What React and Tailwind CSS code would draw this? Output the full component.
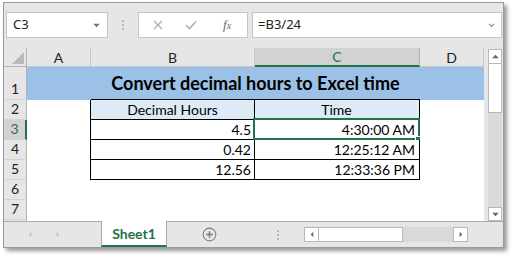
import React from 'react';

const cols = [
  { key: 'A', w: 'w-[64px]' },
  { key: 'B', w: 'w-[164px]' },
  { key: 'C', w: 'w-[165px]' },
  { key: 'D', w: 'w-[64px]' },
];

const data = [
  ['4.5', '4:30:00 AM'],
  ['0.42', '12:25:12 AM'],
  ['12.56', '12:33:36 PM'],
];

const cellFont = { fontFamily: "Lato, 'Open Sans', sans-serif" };

function RowHeader({ n, h, active }) {
  return (
    <div
      className={`w-[23px] shrink-0 ${h} flex items-end justify-center pb-[1px] border-b border-[#d4d4d4] text-[14px] leading-none ${
        active
          ? 'bg-[#d2d2d2] border-r-2 border-r-[#217346] text-[#217346]'
          : 'bg-[#e6e6e6] border-r border-r-[#b4b4b4] text-[#222]'
      }`}
      style={cellFont}
    >
      <span className="pb-[2px]">{n}</span>
    </div>
  );
}

function TitleRow() {
  return (
    <div className="flex h-[33px]">
      <RowHeader n={1} h="h-[33px]" />
      <div className="flex flex-1 bg-[#9bc2e6] relative">
        <div className="w-[64px] h-full" />
        <div className="w-[164px] h-full border-b border-black" />
        <div className="w-[165px] h-full border-b border-black" />
        <div className="w-[64px] h-full" />
        <div className="absolute inset-0 flex items-center justify-center pb-[1px] text-[18px] font-bold text-black" style={cellFont}>
          Convert decimal hours to Excel time
        </div>
      </div>
    </div>
  );
}

function TableRow({ n, b, c, header, active }) {
  return (
    <div className="flex h-[20px]">
      <RowHeader n={n} h="h-[20px]" active={active} />
      <div className="w-[64px] h-full border-r border-black bg-white" />
      <div
        className={`w-[164px] h-full border-r border-b border-black flex items-center px-[3px] text-[14px] text-black ${
          header ? 'bg-[#ddebf7] justify-center' : 'bg-white justify-end'
        }`}
        style={cellFont}
      >
        {b}
      </div>
      <div
        className={`relative w-[165px] h-full border-r border-b border-black flex items-center pl-[3px] pr-[4px] text-[14px] text-black ${
          header ? 'bg-[#ddebf7] justify-center' : 'bg-white justify-end'
        }`}
        style={cellFont}
      >
        {c}
        {active && (
          <>
            <div className="absolute -left-[2px] -top-[2px] w-[167px] h-[22px] border-2 border-[#217346]" />
            <div className="absolute left-[160px] top-[16px] w-[6px] h-[6px] bg-[#217346] border border-white" />
          </>
        )}
      </div>
      <div className="w-[64px] h-full bg-white" />
    </div>
  );
}

function EmptyRow({ n }) {
  return (
    <div className="flex h-[20px]">
      <RowHeader n={n} h="h-[20px]" />
      <div className="flex-1 bg-white" />
    </div>
  );
}

function Tri({ dir, cls }) {
  const pts = {
    up: '0,5 4,1 8,5',
    down: '0,1 4,5 8,1',
    left: '5,0 1,4 5,8',
    right: '1,0 5,4 1,8',
  }[dir];
  const vb = dir === 'up' || dir === 'down' ? '0 0 8 6' : '0 0 6 8';
  return (
    <svg viewBox={vb} className={cls}>
      <polygon points={pts} fill="currentColor" />
    </svg>
  );
}

function Dots() {
  return (
    <div className="flex flex-col gap-[2px]">
      <div className="w-[2px] h-[2px] bg-[#b5b5b5]" />
      <div className="w-[2px] h-[2px] bg-[#b5b5b5]" />
      <div className="w-[2px] h-[2px] bg-[#b5b5b5]" />
    </div>
  );
}

export default function App() {
  return (
    <div className="w-[512px] h-[258px] bg-white overflow-hidden">
      <div className="ml-[3px] mt-[2px] w-[501px] h-[246px] border border-[#9a9a9a] bg-[#e6e6e6] flex flex-col shadow-[3px_3px_4px_rgba(0,0,0,0.4)]">
        {/* formula bar */}
        <div className="h-[45px] shrink-0 flex items-start pt-[9px]" style={{ fontFamily: "'Noto Sans', 'Liberation Sans', sans-serif" }}>
          <div className="ml-[2px] w-[102px] h-[26px] bg-white border border-[#c6c6c6] flex items-center pl-[6px] pr-[7px] text-[13px] text-[#222]">
            <span className="flex-1">C3</span>
            <Tri dir="down" cls="w-[7px] h-[5px] text-[#777]" />
          </div>
          <div className="w-[30px] h-[26px] flex items-center justify-center">
            <Dots />
          </div>
          <div className="w-[110px] h-[26px] bg-white border border-[#c6c6c6] flex items-center">
            <svg viewBox="0 0 10 10" className="ml-[14px] w-[10px] h-[10px]">
              <path d="M1 1 L9 9 M9 1 L1 9" stroke="#b0b0b0" strokeWidth="1.3" fill="none" />
            </svg>
            <svg viewBox="0 0 12 10" className="ml-[22px] w-[12px] h-[10px]">
              <path d="M1 5 L4.5 8.5 L11 1.5" stroke="#b0b0b0" strokeWidth="1.6" fill="none" />
            </svg>
            <span className="ml-[26px] text-[13px] italic text-[#6a6a6a]" style={{ fontFamily: "'Liberation Serif', serif" }}>
              f<span className="text-[10px]">x</span>
            </span>
          </div>
          <div className="ml-[4px] mr-[1px] flex-1 h-[26px] bg-white border border-[#c6c6c6] flex items-center pl-[5px] pr-[6px] text-[13px] text-[#222]">
            <span className="flex-1">=B3/24</span>
            <svg viewBox="0 0 8 6" className="w-[7px] h-[5px]">
              <path d="M1 1 L4 4 L7 1" stroke="#888" strokeWidth="1.4" fill="none" />
            </svg>
          </div>
        </div>

        {/* grid */}
        <div className="h-[173px] shrink-0 flex">
          <div className="w-[480px] h-full overflow-hidden flex flex-col">
            <div className="flex h-[19px] shrink-0 text-[14px] text-[#222]" style={cellFont}>
              <div className="w-[23px] h-full border-r border-b border-[#b4b4b4] bg-[#e6e6e6] flex items-end justify-end p-[2px]">
                <svg viewBox="0 0 12 12" className="w-[12px] h-[12px]">
                  <polygon points="12,0 12,12 0,12" fill="#b9b9b9" />
                </svg>
              </div>
              {cols.map((c) => (
                <div
                  key={c.key}
                  className={`${c.w} h-full flex items-center justify-center ${
                    c.key === 'C'
                      ? 'bg-[#d2d2d2] border-r border-r-[#b4b4b4] border-b-2 border-b-[#217346] text-[#217346]'
                      : 'bg-[#e6e6e6] border-r border-b border-[#c6c6c6]'
                  }`}
                >
                  {c.key}
                </div>
              ))}
            </div>
            <TitleRow />
            <TableRow n={2} b="Decimal Hours" c="Time" header />
            {data.map((r, i) => (
              <TableRow key={i} n={i + 3} b={r[0]} c={r[1]} active={i === 0} />
            ))}
            <EmptyRow n={6} />
            <EmptyRow n={7} />
            <div className="flex flex-1">
              <div className="w-[23px] bg-[#e6e6e6] border-r border-r-[#b4b4b4]" />
              <div className="flex-1 bg-white" />
            </div>
          </div>
          <div className="ml-[4px] w-[14px] mt-[1px] flex flex-col">
            <div className="h-[15px] bg-white border border-[#b8b8b8] flex items-center justify-center">
              <Tri dir="up" cls="w-[7px] h-[5px] text-[#666]" />
            </div>
            <div className="h-[49px] bg-white border-x border-b border-[#b8b8b8]" />
            <div className="flex-1 bg-[#dadada]" />
            <div className="h-[14px] bg-white border border-[#b8b8b8] flex items-center justify-center">
              <Tri dir="down" cls="w-[7px] h-[5px] text-[#666]" />
            </div>
          </div>
        </div>

        {/* sheet tabs */}
        <div className="flex-1 flex items-stretch border-t border-[#ababab]">
          <div className="w-[97px] flex items-center">
            <Tri dir="left" cls="ml-[24px] w-[4px] h-[7px] text-[#c2c2c2]" />
            <Tri dir="right" cls="ml-[24px] w-[4px] h-[7px] text-[#c2c2c2]" />
          </div>
          <div className="-mt-[1px] w-[66px] bg-white border-x border-[#ababab] border-b-2 border-b-[#217346] flex items-center justify-center text-[14px] font-bold text-[#217346]" style={cellFont}>
            Sheet1
          </div>
          <div className="w-[84px] flex items-center justify-center">
            <svg viewBox="0 0 16 16" className="w-[15px] h-[15px]">
              <circle cx="8" cy="8" r="6.8" stroke="#7a7a7a" strokeWidth="1.1" fill="none" />
              <path d="M8 4.5 V11.5 M4.5 8 H11.5" stroke="#7a7a7a" strokeWidth="1.5" />
            </svg>
          </div>
          <div className="w-[53px] flex items-center justify-center">
            <Dots />
          </div>
          <div className="flex items-center">
            <div className="flex h-[15px]">
              <div className="w-[15px] bg-white border border-[#b8b8b8] flex items-center justify-center">
                <Tri dir="left" cls="w-[4px] h-[7px] text-[#666]" />
              </div>
              <div className="w-[84px] bg-white border-y border-r border-[#b8b8b8]" />
              <div className="w-[50px] bg-[#dadada]" />
              <div className="w-[15px] bg-white border border-[#b8b8b8] flex items-center justify-center">
                <Tri dir="right" cls="w-[4px] h-[7px] text-[#666]" />
              </div>
            </div>
          </div>
        </div>
      </div>
    </div>
  );
}
